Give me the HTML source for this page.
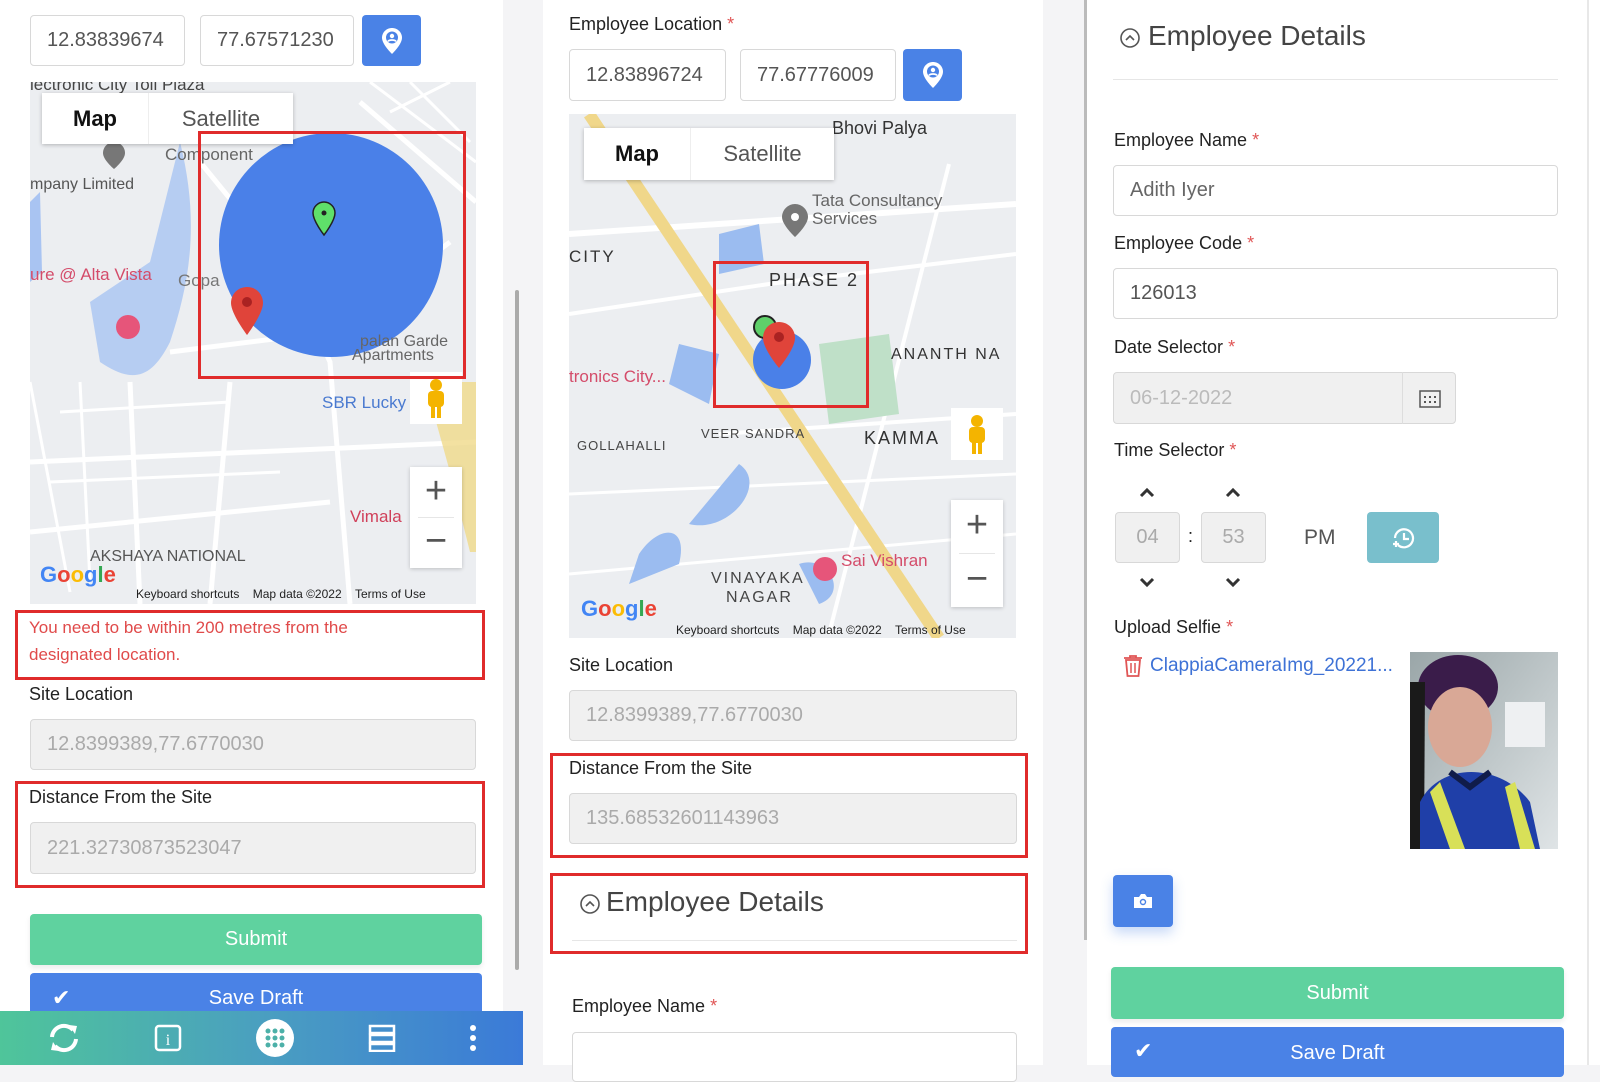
<!DOCTYPE html>
<html><head><meta charset="utf-8"><style>
*{box-sizing:border-box;margin:0;padding:0}
body{width:1600px;height:1065px;position:relative;overflow:hidden;background:#f4f4f6;font-family:"Liberation Sans","Noto Sans CJK SC",sans-serif;color:#222}
.a{position:absolute}
.p{position:absolute;top:0;height:1065px;background:#fff}
.inp{position:absolute;border:1px solid #d8d8d8;border-radius:4px;background:#fff;font-size:20px;color:#555;padding-left:16px;display:flex;align-items:center;overflow:hidden;white-space:nowrap}
.dis{background:#f0f0f0;color:#aaa}
.lbl{position:absolute;font-size:18px;color:#222;font-weight:500}
.st{color:#e05555}
.btn{position:absolute;border-radius:4px;color:#fff;font-size:20px;display:flex;align-items:center;justify-content:center}
.green{background:#5fd29f;box-shadow:0 3px 6px rgba(0,0,0,.08)}
.blue{background:#4a82e6}
.rb{position:absolute;border:3px solid #e02b2b}
.pinbtn{position:absolute;background:#4a82e6;border-radius:4px;display:flex;align-items:center;justify-content:center}
.ctrl{position:absolute;background:#fff;box-shadow:0 1px 4px rgba(0,0,0,.25);display:flex;font-size:22px}
.ctrl div{display:flex;align-items:center;justify-content:center}
.mt{position:absolute;font-size:17px;color:#555;white-space:nowrap}
.foot{position:absolute;font-size:12px;color:#222;white-space:nowrap}
</style></head><body>

<!-- Panel 1 -->
<div class="p" style="left:0;width:503px"></div>
<div class="a" style="left:515px;top:290px;width:4px;height:680px;background:#aaa;border-radius:2px"></div>
<div class="inp" style="left:30px;top:15px;width:155px;height:51px">12.83839674</div>
<div class="inp" style="left:200px;top:15px;width:154px;height:51px">77.67571230</div>
<div class="pinbtn" style="left:362px;top:15px;width:59px;height:51px"><svg width="22" height="28" viewBox="0 0 22 28"><path d="M11 1C5.5 1 1 5.3 1 10.8 1 17.5 11 27 11 27s10-9.5 10-16.2C21 5.3 16.5 1 11 1z" fill="#fff"/><circle cx="11" cy="10.5" r="6" fill="#4a82e6"/><circle cx="11" cy="9" r="2.2" fill="#fff"/><path d="M7 14.5c1-2 7-2 8 0" stroke="#fff" stroke-width="1.8" fill="none"/></svg></div>
<svg class="a" style="left:30px;top:82px" width="446" height="522" viewBox="0 0 446 522">
<rect width="446" height="522" fill="#eceef1"/>
<path d="M150 60 C170 140 160 200 140 260 C120 300 100 300 70 280 L60 220 L120 180 Z" fill="#a9c4f2" opacity=".8"/>
<path d="M0 120 L10 110 L12 190 L0 200Z" fill="#a9c4f2"/>
<g stroke="#fff" stroke-width="5" fill="none"><path d="M0 380 L446 360"/><path d="M170 80 L260 190 L300 280 L320 522"/><path d="M200 300 L180 522"/><path d="M100 300 L110 522"/><path d="M140 270 L300 250 L420 160"/><path d="M330 20 L446 120"/><path d="M0 450 L300 420"/></g>
<g stroke="#fff" stroke-width="3" fill="none"><path d="M30 330 L200 320"/><path d="M50 300 L60 500"/><path d="M20 400 L250 390"/><path d="M340 0 L446 80"/><path d="M380 0 L440 60"/><path d="M360 30 L420 0"/><path d="M0 300 L40 510"/></g>
<path d="M395 300 L420 390 L440 470 L446 470 L446 300 Z" fill="#f0d98a" opacity=".8"/>
<circle cx="301" cy="163" r="112" fill="#4a80e8"/>
<path d="M294 120 c-6 0-11 5-11 11 0 8 11 22 11 22s11-14 11-22c0-6-5-11-11-11z" fill="#5fe06a" stroke="#222" stroke-width="1.5"/><circle cx="294" cy="131" r="2.5" fill="#222"/>
<path d="M217 205 c-9 0-16 7-16 16 0 11 16 32 16 32s16-21 16-32c0-9-7-16-16-16z" fill="#e0443a"/><circle cx="217" cy="220" r="5" fill="#a22"/>
<path d="M84 60 c-6 0-11 5-11 11 0 7 11 16 11 16s11-9 11-16c0-6-5-11-11-11z" fill="#777"/>
<circle cx="98" cy="245" r="12" fill="#e6557a"/>
<text x="0" y="8" font-size="17" fill="#444" font-family="Liberation Sans">lectronic City Toll Plaza</text>
<text x="135" y="78" font-size="17" fill="#666" font-family="Liberation Sans">Component</text>
<text x="0" y="107" font-size="16" fill="#555" font-family="Liberation Sans">mpany Limited</text>
<text x="0" y="198" font-size="17" fill="#d44c6a" font-family="Liberation Sans">ure @ Alta Vista</text>
<text x="148" y="204" font-size="17" fill="#777" font-family="Liberation Sans">Gopa</text>
<text x="330" y="264" font-size="16" fill="#666" font-family="Liberation Sans">palan Garde</text>
<text x="322" y="278" font-size="16" fill="#666" font-family="Liberation Sans">Apartments</text>
<text x="292" y="326" font-size="17" fill="#4a7ad0" font-family="Liberation Sans">SBR Lucky</text>
<text x="320" y="440" font-size="17" fill="#d0405a" font-family="Liberation Sans">Vimala</text>
<text x="60" y="479" font-size="16" fill="#555" font-family="Liberation Sans">AKSHAYA NATIONAL</text>
<text x="10" y="500" font-size="22" font-weight="bold" font-family="Liberation Sans"><tspan fill="#4285f4">G</tspan><tspan fill="#ea4335">o</tspan><tspan fill="#fbbc05">o</tspan><tspan fill="#4285f4">g</tspan><tspan fill="#34a853">l</tspan><tspan fill="#ea4335">e</tspan></text>
</svg>
<div class="ctrl" style="left:42px;top:93px;width:251px;height:51px"><div style="width:106px;font-weight:bold;color:#111">Map</div><div style="width:145px;color:#555;border-left:1px solid #eee">Satellite</div></div>
<div class="a" style="left:410px;top:372px;width:52px;height:52px;background:#fff;display:flex;justify-content:center;align-items:center"><svg width="22" height="40"><circle cx="11" cy="7" r="6" fill="#f4b400"/><rect x="3" y="13" width="16" height="16" rx="4" fill="#f4b400"/><rect x="6" y="26" width="4" height="14" fill="#f4b400"/><rect x="12" y="26" width="4" height="14" fill="#f4b400"/></svg></div>
<div class="a" style="left:410px;top:467px;width:52px;height:101px;background:#fff;box-shadow:0 1px 4px rgba(0,0,0,.2)"><div style="height:50px;text-align:center;font-size:38px;line-height:48px;color:#555">+</div><div style="height:1px;background:#e6e6e6;margin:0 8px"></div><div style="height:50px;text-align:center;font-size:38px;line-height:46px;color:#555">−</div></div>
<div class="foot" style="left:136px;top:587px">Keyboard shortcuts&nbsp;&nbsp;&nbsp;&nbsp;Map data ©2022&nbsp;&nbsp;&nbsp;&nbsp;Terms of Use</div>
<div class="rb" style="left:198px;top:131px;width:268px;height:248px"></div>
<div class="rb" style="left:15px;top:610px;width:470px;height:70px"></div>
<div class="a" style="left:29px;top:614px;font-size:17px;color:#e04a4a;line-height:27px">You need to be within 200 metres from the<br>designated location.</div>
<div class="lbl" style="left:29px;top:684px">Site Location</div>
<div class="inp dis" style="left:30px;top:719px;width:446px;height:51px">12.8399389,77.6770030</div>
<div class="rb" style="left:15px;top:781px;width:470px;height:107px"></div>
<div class="lbl" style="left:29px;top:787px">Distance From the Site</div>
<div class="inp dis" style="left:30px;top:822px;width:446px;height:52px">221.32730873523047</div>
<div class="btn green" style="left:30px;top:914px;width:452px;height:51px">Submit</div>
<div class="btn blue" style="left:30px;top:973px;width:452px;height:50px;align-items:flex-start;padding-top:14px">Save Draft</div>
<div class="a" style="left:52px;top:985px;color:#fff;font-size:22px">✔</div>
<div class="a" style="left:0;top:1011px;width:523px;height:54px;background:linear-gradient(90deg,#4fc59a,#4a9fc0 50%,#3b7ad8);display:flex;align-items:center;justify-content:space-around;padding:0 10px">
<svg width="34" height="30" viewBox="0 0 34 30"><path d="M5 14a12 12 0 0 1 21-7" stroke="#fff" stroke-width="4" fill="none"/><path d="M29 16a12 12 0 0 1-21 7" stroke="#fff" stroke-width="4" fill="none"/><path d="M22 2l8 1-2 8z" fill="#fff"/><path d="M12 28l-8-1 2-8z" fill="#fff"/></svg>
<svg width="28" height="28"><rect x="2" y="2" width="24" height="24" rx="3" stroke="#fff" stroke-width="2.5" fill="none"/><text x="14" y="21" font-size="16" fill="#fff" text-anchor="middle" font-family="Liberation Serif">i</text></svg>
<svg width="40" height="40"><circle cx="20" cy="20" r="19" fill="#fff"/><g fill="#4cb0a8"><circle cx="13" cy="13" r="2.5"/><circle cx="20" cy="13" r="2.5"/><circle cx="27" cy="13" r="2.5"/><circle cx="13" cy="20" r="2.5"/><circle cx="20" cy="20" r="2.5"/><circle cx="27" cy="20" r="2.5"/><circle cx="13" cy="27" r="2.5"/><circle cx="20" cy="27" r="2.5"/><circle cx="27" cy="27" r="2.5"/></g></svg>
<svg width="28" height="28"><g stroke="#fff" stroke-width="2.5" fill="none"><rect x="2" y="2" width="24" height="7"/><rect x="2" y="11" width="24" height="7"/><rect x="2" y="20" width="24" height="7"/></g></svg>
<svg width="8" height="28"><circle cx="4" cy="4" r="3" fill="#fff"/><circle cx="4" cy="14" r="3" fill="#fff"/><circle cx="4" cy="24" r="3" fill="#fff"/></svg>
</div>

<!-- Panel 2 -->
<div class="p" style="left:543px;width:500px"></div>
<div class="lbl" style="left:569px;top:14px">Employee Location <span class="st">*</span></div>
<div class="inp" style="left:569px;top:49px;width:157px;height:52px">12.83896724</div>
<div class="inp" style="left:740px;top:49px;width:156px;height:52px">77.67776009</div>
<div class="pinbtn" style="left:903px;top:49px;width:59px;height:52px"><svg width="22" height="28" viewBox="0 0 22 28"><path d="M11 1C5.5 1 1 5.3 1 10.8 1 17.5 11 27 11 27s10-9.5 10-16.2C21 5.3 16.5 1 11 1z" fill="#fff"/><circle cx="11" cy="10.5" r="6" fill="#4a82e6"/><circle cx="11" cy="9" r="2.2" fill="#fff"/><path d="M7 14.5c1-2 7-2 8 0" stroke="#fff" stroke-width="1.8" fill="none"/></svg></div>
<svg class="a" style="left:569px;top:114px" width="447" height="524" viewBox="0 0 447 524">
<rect width="447" height="524" fill="#eceef1"/>
<path d="M0 120 L447 90" stroke="#fff" stroke-width="6"/>
<path d="M0 200 L200 170 L447 140" stroke="#fff" stroke-width="4" fill="none"/>
<path d="M150 320 L447 300" stroke="#fff" stroke-width="4"/>
<path d="M0 380 L447 360" stroke="#fff" stroke-width="3"/>
<path d="M380 50 L260 520" stroke="#fff" stroke-width="4"/>
<path d="M0 460 L447 420" stroke="#fff" stroke-width="3"/>
<path d="M20 0 L370 524" stroke="#f0d78a" stroke-width="12"/>
<path d="M250 230 L320 220 L330 300 L260 310Z" fill="#bfe0c8"/>
<path d="M110 230 L150 240 L140 290 L100 270Z" fill="#9bbcf0"/>
<path d="M150 120 L190 110 L195 150 L150 160Z" fill="#9bbcf0"/>
<path d="M70 440 C90 410 120 410 110 450 L60 470Z" fill="#9bbcf0"/>
<path d="M170 350 C200 370 160 420 120 410Z" fill="#9bbcf0"/>
<path d="M230 450 C260 440 280 480 250 490Z" fill="#9bbcf0"/>
<circle cx="213" cy="246" r="29" fill="#4a80e8"/>
<circle cx="196" cy="213" r="11" fill="#5fd06a" stroke="#222" stroke-width="2"/>
<path d="M210 208 c-9 0-16 7-16 16 0 11 16 30 16 30s16-19 16-30c0-9-7-16-16-16z" fill="#e0443a"/><circle cx="210" cy="223" r="5" fill="#a22"/>
<path d="M226 90 c-7 0-13 6-13 13 0 8 13 20 13 20s13-12 13-20c0-7-6-13-13-13z" fill="#777"/><circle cx="226" cy="103" r="4" fill="#fff"/>
<circle cx="256" cy="455" r="12" fill="#e6557a"/>
<text x="263" y="20" font-size="18" fill="#333" font-family="Liberation Sans">Bhovi Palya</text>
<text x="243" y="92" font-size="17" fill="#666" font-family="Liberation Sans">Tata Consultancy</text>
<text x="243" y="110" font-size="17" fill="#666" font-family="Liberation Sans">Services</text>
<text x="0" y="148" font-size="17" fill="#333" font-family="Liberation Sans" letter-spacing="2">CITY</text>
<text x="200" y="172" font-size="18" fill="#333" font-family="Liberation Sans" letter-spacing="2">PHASE 2</text>
<text x="0" y="268" font-size="17" fill="#d44c6a" font-family="Liberation Sans">tronics City...</text>
<text x="322" y="245" font-size="16" fill="#333" font-family="Liberation Sans" letter-spacing="2">ANANTH NA</text>
<text x="132" y="324" font-size="13" fill="#444" font-family="Liberation Sans" letter-spacing="1">VEER SANDRA</text>
<text x="8" y="336" font-size="13" fill="#444" font-family="Liberation Sans" letter-spacing="1">GOLLAHALLI</text>
<text x="295" y="330" font-size="18" fill="#333" font-family="Liberation Sans" letter-spacing="2">KAMMA</text>
<text x="272" y="452" font-size="17" fill="#d44c6a" font-family="Liberation Sans">Sai Vishran</text>
<text x="142" y="469" font-size="16" fill="#444" font-family="Liberation Sans" letter-spacing="2">VINAYAKA</text>
<text x="157" y="488" font-size="16" fill="#444" font-family="Liberation Sans" letter-spacing="2">NAGAR</text>
<text x="12" y="502" font-size="22" font-weight="bold" font-family="Liberation Sans"><tspan fill="#4285f4">G</tspan><tspan fill="#ea4335">o</tspan><tspan fill="#fbbc05">o</tspan><tspan fill="#4285f4">g</tspan><tspan fill="#34a853">l</tspan><tspan fill="#ea4335">e</tspan></text>
</svg>
<div class="ctrl" style="left:584px;top:128px;width:250px;height:52px"><div style="width:106px;font-weight:bold;color:#111">Map</div><div style="width:144px;color:#555;border-left:1px solid #eee">Satellite</div></div>
<div class="a" style="left:951px;top:408px;width:52px;height:52px;background:#fff;display:flex;justify-content:center;align-items:center"><svg width="22" height="40"><circle cx="11" cy="7" r="6" fill="#f4b400"/><rect x="3" y="13" width="16" height="16" rx="4" fill="#f4b400"/><rect x="6" y="26" width="4" height="14" fill="#f4b400"/><rect x="12" y="26" width="4" height="14" fill="#f4b400"/></svg></div>
<div class="a" style="left:951px;top:500px;width:52px;height:107px;background:#fff;box-shadow:0 1px 4px rgba(0,0,0,.2)"><div style="height:53px;text-align:center;font-size:38px;line-height:50px;color:#555">+</div><div style="height:1px;background:#e6e6e6;margin:0 8px"></div><div style="height:53px;text-align:center;font-size:38px;line-height:50px;color:#555">−</div></div>
<div class="foot" style="left:676px;top:623px">Keyboard shortcuts&nbsp;&nbsp;&nbsp;&nbsp;Map data ©2022&nbsp;&nbsp;&nbsp;&nbsp;Terms of Use</div>
<div class="rb" style="left:713px;top:261px;width:156px;height:147px"></div>
<div class="lbl" style="left:569px;top:655px">Site Location</div>
<div class="inp dis" style="left:569px;top:690px;width:448px;height:51px">12.8399389,77.6770030</div>
<div class="rb" style="left:550px;top:753px;width:478px;height:105px"></div>
<div class="lbl" style="left:569px;top:758px">Distance From the Site</div>
<div class="inp dis" style="left:569px;top:793px;width:448px;height:51px">135.68532601143963</div>
<div class="rb" style="left:550px;top:873px;width:478px;height:81px"></div>
<div class="a" style="left:579px;top:893px"><svg width="22" height="22"><circle cx="11" cy="11" r="9" stroke="#555" stroke-width="1.6" fill="none"/><path d="M7 13l4-4 4 4" stroke="#555" stroke-width="1.6" fill="none"/></svg></div>
<div class="a" style="left:606px;top:886px;font-size:28px;color:#444">Employee Details</div>
<div class="a" style="left:572px;top:940px;width:445px;height:1px;background:#e6e6e6"></div>
<div class="lbl" style="left:572px;top:996px">Employee Name <span class="st">*</span></div>
<div class="inp" style="left:572px;top:1032px;width:445px;height:50px"></div>

<!-- Panel 3 -->
<div class="a" style="left:1084px;top:0;width:3px;height:940px;background:#bbb"></div>
<div class="p" style="left:1087px;width:513px"></div>
<div class="a" style="left:1587px;top:0;width:2px;height:1065px;background:#e8e8e8"></div>
<div class="a" style="left:1119px;top:27px"><svg width="22" height="22"><circle cx="11" cy="11" r="9" stroke="#555" stroke-width="1.6" fill="none"/><path d="M7 13l4-4 4 4" stroke="#555" stroke-width="1.6" fill="none"/></svg></div>
<div class="a" style="left:1148px;top:20px;font-size:28px;color:#444">Employee Details</div>
<div class="a" style="left:1113px;top:79px;width:445px;height:1px;background:#e6e6e6"></div>
<div class="lbl" style="left:1114px;top:130px">Employee Name <span class="st">*</span></div>
<div class="inp" style="left:1113px;top:165px;width:445px;height:51px;color:#666">Adith Iyer</div>
<div class="lbl" style="left:1114px;top:233px">Employee Code <span class="st">*</span></div>
<div class="inp" style="left:1113px;top:268px;width:445px;height:51px;color:#555">126013</div>
<div class="lbl" style="left:1114px;top:337px">Date Selector <span class="st">*</span></div>
<div class="inp dis" style="left:1113px;top:372px;width:343px;height:52px;color:#bbb">06-12-2022</div>
<div class="a" style="left:1402px;top:372px;width:54px;height:52px;border-left:1px solid #ddd;display:flex;align-items:center;justify-content:center"><svg width="22" height="20"><rect x="1" y="3" width="20" height="16" stroke="#555" stroke-width="1.5" fill="none"/><g fill="#555"><rect x="5" y="8" width="2" height="2"/><rect x="10" y="8" width="2" height="2"/><rect x="15" y="8" width="2" height="2"/><rect x="5" y="13" width="2" height="2"/><rect x="10" y="13" width="2" height="2"/><rect x="15" y="13" width="2" height="2"/></g></svg></div>
<div class="lbl" style="left:1114px;top:440px">Time Selector <span class="st">*</span></div>
<svg class="a" style="left:1139px;top:486px" width="16" height="12"><path d="M2 10l6-6 6 6" stroke="#333" stroke-width="3" fill="none"/></svg>
<svg class="a" style="left:1225px;top:486px" width="16" height="12"><path d="M2 10l6-6 6 6" stroke="#333" stroke-width="3" fill="none"/></svg>
<div class="inp dis" style="left:1115px;top:512px;width:65px;height:51px;padding:0;justify-content:center;color:#aaa">04</div>
<div class="a" style="left:1188px;top:526px;font-size:18px">:</div>
<div class="inp dis" style="left:1201px;top:512px;width:65px;height:51px;padding:0;justify-content:center;color:#aaa">53</div>
<div class="a" style="left:1304px;top:526px;font-size:21px;color:#555">PM</div>
<div class="btn" style="left:1367px;top:512px;width:72px;height:51px;background:#79bfcc"><svg width="26" height="26" viewBox="0 0 26 26"><path d="M5 13a9 9 0 1 1 3 7" stroke="#fff" stroke-width="2.2" fill="none"/><path d="M14 8v6h5" stroke="#fff" stroke-width="2.2" fill="none"/><path d="M3 19h6M6 16v6" stroke="#fff" stroke-width="2.2"/></svg></div>
<svg class="a" style="left:1139px;top:577px" width="16" height="12"><path d="M2 2l6 6 6-6" stroke="#333" stroke-width="3" fill="none"/></svg>
<svg class="a" style="left:1225px;top:577px" width="16" height="12"><path d="M2 2l6 6 6-6" stroke="#333" stroke-width="3" fill="none"/></svg>
<div class="lbl" style="left:1114px;top:617px">Upload Selfie <span class="st">*</span></div>
<svg class="a" style="left:1122px;top:654px" width="22" height="24"><path d="M2 4h18M8 4V2h6v2M4 6l1.5 16h11L18 6z" stroke="#e05555" stroke-width="1.8" fill="none"/><path d="M9 9v10M13 9v10" stroke="#e05555" stroke-width="1.5"/></svg>
<div class="a" style="left:1150px;top:655px;font-size:19px;color:#3e72d6">ClappiaCameraImg_20221...</div>
<svg class="a" style="left:1410px;top:652px" width="148" height="197" viewBox="0 0 148 197">
<defs><linearGradient id="bg" x1="0" y1="0" x2="1" y2="1"><stop offset="0" stop-color="#9aa6a8"/><stop offset="1" stop-color="#dfe4e6"/></linearGradient></defs>
<rect width="148" height="197" fill="url(#bg)"/>
<rect x="95" y="50" width="40" height="45" fill="#eef0f2"/>
<ellipse cx="48" cy="35" rx="40" ry="32" fill="#3a1c4a"/>
<ellipse cx="50" cy="75" rx="32" ry="40" fill="#d9a896"/>
<path d="M0 30 L15 30 L14 197 L0 197Z" fill="#1a1a1a"/>
<path d="M10 150 C30 110 90 110 120 150 L130 197 L10 197Z" fill="#1f3fa8"/>
<path d="M20 140 L40 197 L55 197 L30 130Z" fill="#d8e058"/>
<path d="M95 135 L110 197 L125 197 L105 130Z" fill="#d8e058"/>
<path d="M40 120 L60 135 L80 120" stroke="#101c4a" stroke-width="6" fill="none"/>
</svg>
<div class="btn blue" style="left:1113px;top:875px;width:60px;height:52px;box-shadow:0 6px 12px rgba(74,130,230,.3)"><svg width="20" height="16"><path d="M1 4h5l2-3h4l2 3h5v11H1z" fill="#fff"/><circle cx="10" cy="9" r="3.2" fill="#4a82e6"/><circle cx="10" cy="9" r="1.8" fill="#fff"/></svg></div>
<div class="btn green" style="left:1111px;top:967px;width:453px;height:52px">Submit</div>
<div class="btn blue" style="left:1111px;top:1027px;width:453px;height:50px;align-items:flex-start;padding-top:15px">Save Draft</div>
<div class="a" style="left:1134px;top:1038px;color:#fff;font-size:22px">✔</div>
</body></html>
